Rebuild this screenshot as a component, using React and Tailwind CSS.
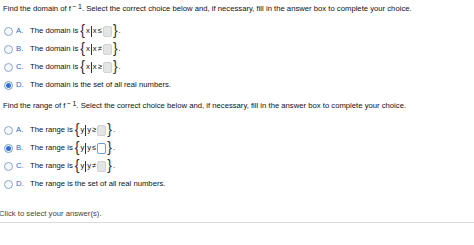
import React from "react";

const font = { fontFamily: '"Liberation Sans", Arial, sans-serif' };

function Radio({ checked }) {
  return checked ? (
    <span className="flex h-[9px] w-[9px] items-center justify-center rounded-full border border-[#6f9bdb] bg-white">
      <span className="block h-[5px] w-[5px] rounded-full bg-[#2f6fd0]" />
    </span>
  ) : (
    <span className="block h-[9px] w-[9px] rounded-full border border-[#8fa8c8] bg-[#f5f8fc]" />
  );
}

function Box({ active }) {
  return (
    <span
      className={
        active
          ? "block h-[11px] w-[9px] rounded-[2px] border border-[#6c9ede] bg-white"
          : "block h-[11px] w-[9px] rounded-[2px] border border-[#d2d2d2] bg-[#e4e4e4]"
      }
    />
  );
}

function SetExpr({ v, op, active }) {
  return (
    <span className="ml-[2px] flex items-center">
      <span className="-mt-[2px] text-[14px] font-light leading-none text-[#333]">{"{"}</span>
      <span className="ml-[1px]">{v}</span>
      <span className="mx-[1px] block h-[11px] w-px bg-[#333]" />
      <span>{v}</span>
      <span className="mx-[1px]">{op}</span>
      <Box active={active} />
      <span className="-mt-[2px] ml-[1px] text-[14px] font-light leading-none text-[#333]">{"}"}</span>
      <span className="ml-[1px]">.</span>
    </span>
  );
}

function Option({ letter, checked, children }) {
  return (
    <div className="flex h-[18px] items-center">
      <span className="ml-px">
        <Radio checked={checked} />
      </span>
      <span className="ml-[3px] w-[14px] text-[#2a6ac8]">{letter}.</span>
      <span className="flex items-center">{children}</span>
    </div>
  );
}

function Heading({ what }) {
  return (
    <div className="flex h-[18px] items-center whitespace-nowrap">
      Find the {what} of f
      <sup className="relative -top-[2px] ml-[1px] text-[7px]">− 1</sup>. Select the correct choice below and, if
      necessary, fill in the answer box to complete your choice.
    </div>
  );
}

export default function App() {
  return (
    <div style={font} className="h-[245px] w-[474px] overflow-hidden bg-white text-[7.7px] text-[#111]">
      <div className="pl-[3px]">
        <Heading what="domain" />
        <div className="mt-[4px] flex flex-col">
          <Option letter="A">
            The domain is <SetExpr v="x" op="≤" />
          </Option>
          <Option letter="B">
            The domain is <SetExpr v="x" op="≠" />
          </Option>
          <Option letter="C">
            The domain is <SetExpr v="x" op="≥" />
          </Option>
          <Option letter="D" checked>
            The domain is the set of all real numbers.
          </Option>
        </div>
        <div className="mt-[3px]">
          <Heading what="range" />
        </div>
        <div className="mt-[6px] flex flex-col">
          <Option letter="A">
            The range is <SetExpr v="y" op="≥" />
          </Option>
          <Option letter="B" checked>
            The range is <SetExpr v="y" op="≤" active />
          </Option>
          <Option letter="C">
            The range is <SetExpr v="y" op="≠" />
          </Option>
          <Option letter="D">
            The range is the set of all real numbers.
          </Option>
        </div>
      </div>
      <div className="mt-[15px] h-[11px] leading-[11px] -ml-px text-[#444]">Click to select your answer(s).</div>
      <div className="mt-[3px] h-px w-full bg-[#dcdcdc]" />
    </div>
  );
}
